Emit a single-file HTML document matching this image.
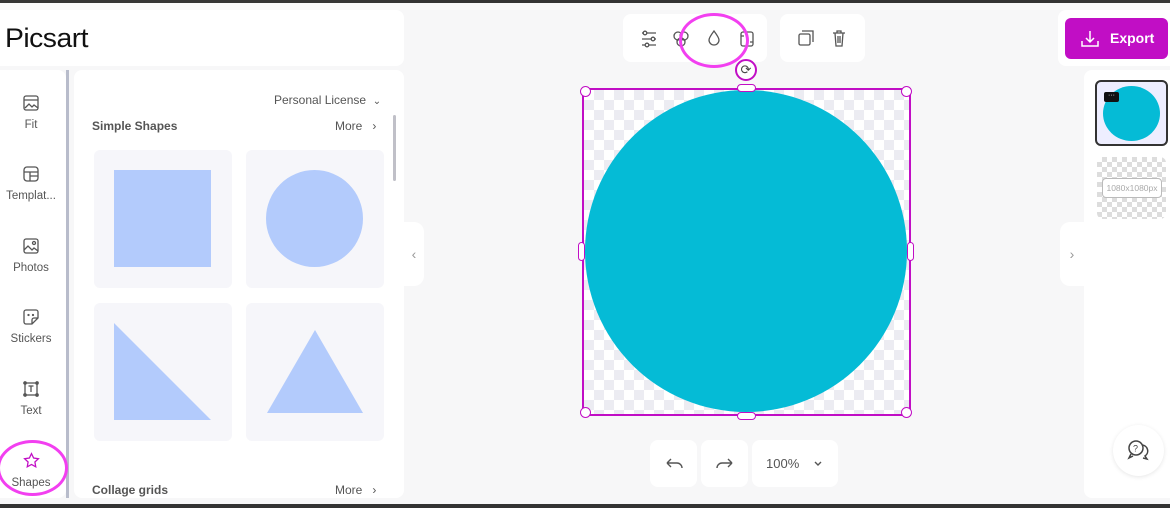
<!DOCTYPE html><html><head><style>
*{margin:0;padding:0;box-sizing:border-box}
body{width:1170px;height:508px;overflow:hidden;background:#f7f7f8;font-family:"Liberation Sans",sans-serif;position:relative;color:#555}
.p{position:absolute;background:#fff;border-radius:8px}
.t{position:absolute;font-size:12px;color:#555}
.nav{position:absolute;left:0;width:62px;text-align:center;font-size:11.5px;color:#555}
.nav svg{display:block;margin:0 auto 8px}
.tile{position:absolute;background:#f6f6fa;border-radius:6px;width:138px;height:138px}
.h{position:absolute;width:11px;height:11px;border:1.5px solid #c10ec5;background:#fff;border-radius:50%}
</style></head><body>
<div style="position:absolute;left:0;top:0;width:1170px;height:3px;background:#333"></div>
<div style="position:absolute;left:0;top:504px;width:1170px;height:4px;background:#333"></div>
<div class="p" style="left:-8px;top:10px;width:412px;height:56px"></div>
<div style="position:absolute;left:5px;top:23px;font-size:27px;color:#111;letter-spacing:-0.5px;transform:scaleX(1.05);transform-origin:left">Picsart</div>
<div class="p" style="left:-8px;top:70px;width:74px;height:428px"></div>
<div style="position:absolute;left:66px;top:70px;width:3px;height:428px;background:#b8bccb"></div>
<div class="p" style="left:74px;top:70px;width:330px;height:428px"></div>
<div style="position:absolute;left:393px;top:115px;width:3px;height:66px;background:#c0c0c8;border-radius:2px"></div>
<div class="nav" style="top:95px"><svg width="16" height="16" viewBox="0 0 16 16" fill="none" stroke="#555" stroke-width="1.3"><rect x="1" y="1" width="14" height="14" rx="2"/><path d="M1 5h14M2 13l4-4 3 3 2-2 4 3"/></svg>Fit</div>
<div class="nav" style="top:166px"><svg width="16" height="16" viewBox="0 0 16 16" fill="none" stroke="#555" stroke-width="1.3"><rect x="1" y="1" width="14" height="14" rx="3"/><path d="M1 6h14M7 6v9M7 10h8"/></svg>Templat...</div>
<div class="nav" style="top:238px"><svg width="16" height="16" viewBox="0 0 16 16" fill="none" stroke="#555" stroke-width="1.3"><rect x="1" y="1" width="14" height="14" rx="2"/><circle cx="11" cy="5" r="1.5"/><path d="M1 12l4-4 4 4 2-2 4 3"/></svg>Photos</div>
<div class="nav" style="top:309px"><svg width="16" height="16" viewBox="0 0 16 16" fill="none" stroke="#555" stroke-width="1.3"><path d="M3 1h10a2 2 0 012 2v6l-6 6H3a2 2 0 01-2-2V3a2 2 0 012-2zM15 9h-4a2 2 0 00-2 2v4"/><circle cx="5.5" cy="6" r=".5"/><circle cx="10" cy="6" r=".5"/></svg>Stickers</div>
<div class="nav" style="top:381px"><svg width="16" height="16" viewBox="0 0 16 16" fill="none" stroke="#555" stroke-width="1.3"><rect x="2" y="2" width="12" height="12"/><path d="M5.5 5h5M8 5v6"/><circle cx="2" cy="2" r="1.2"/><circle cx="14" cy="2" r="1.2"/><circle cx="2" cy="14" r="1.2"/><circle cx="14" cy="14" r="1.2"/></svg>Text</div>
<div class="nav" style="top:452px;color:#555"><svg width="17" height="17" viewBox="0 0 16 16" fill="none" stroke="#c10ec5" stroke-width="1.2"><path d="M8 1.5l2 4.2 4.5.6-3.3 3.1.8 4.5L8 11.7l-4 2.2.8-4.5L1.5 6.3 6 5.7z"/></svg>Shapes</div>
<div style="position:absolute;left:-3px;top:440px;width:71px;height:56px;border:3px solid #f23ff0;border-radius:50%"></div>
<div class="t" style="left:274px;top:93px;font-size:12px">Personal License&nbsp; <span style="font-size:10px">&#8964;</span></div>
<div class="t" style="left:92px;top:119px;font-weight:bold;color:#555">Simple Shapes</div>
<div class="t" style="left:335px;top:119px">More &nbsp;&nbsp;&rsaquo;</div>
<div class="tile" style="left:94px;top:150px"><div style="position:absolute;left:20px;top:20px;width:97px;height:97px;background:#b3cbfc"></div></div>
<div class="tile" style="left:246px;top:150px"><div style="position:absolute;left:20px;top:20px;width:97px;height:97px;background:#b3cbfc;border-radius:50%"></div></div>
<div class="tile" style="left:94px;top:303px"><svg width="138" height="138"><path d="M20 20V117H117z" fill="#b3cbfc"/></svg></div>
<div class="tile" style="left:246px;top:303px"><svg width="138" height="138"><path d="M69 27L117 110H21z" fill="#b3cbfc"/></svg></div>
<div class="t" style="left:92px;top:483px;font-weight:bold">Collage grids</div>
<div class="t" style="left:335px;top:483px">More &nbsp;&nbsp;&rsaquo;</div>
<div style="position:absolute;left:404px;top:222px;width:20px;height:64px;background:#fff;border-radius:0 10px 10px 0;color:#999;font-size:14px;line-height:64px;text-align:center">&lsaquo;</div>
<div style="position:absolute;left:1060px;top:222px;width:24px;height:64px;background:#fff;border-radius:10px 0 0 10px;color:#999;font-size:14px;line-height:64px;text-align:center">&rsaquo;</div>
<div class="p" style="left:623px;top:14px;width:144px;height:48px"></div>
<div class="p" style="left:780px;top:14px;width:85px;height:48px"></div>
<svg style="position:absolute;left:620px;top:14px" width="250" height="48" fill="none" stroke="#555" stroke-width="1.3">
<path d="M22 19h14M22 25h14M22 31h14"/><circle cx="25" cy="19" r="1.8" fill="#fff"/><circle cx="33" cy="25" r="1.8" fill="#fff"/><circle cx="27" cy="31" r="1.8" fill="#fff"/>
<circle cx="58" cy="22" r="4"/><circle cx="64" cy="22" r="4"/><circle cx="61" cy="28" r="4"/>
<path d="M94 17c-3 4-5 7-5 9a5 5 0 0010 0c0-2-2-5-5-9z"/>
<rect x="121" y="18" width="12" height="14" rx="2"/><path d="M121 22h3M130 28h3"/>
<rect x="179" y="20" width="11" height="11" rx="1.5"/><path d="M182 17h11v11"/>
<path d="M213 19h12M217 19v-2h4v2M215 19l1 13h6l1-13M218 22v7M220 22v7"/>
</svg>
<div style="position:absolute;left:679px;top:13px;width:70px;height:55px;border:3px solid #f23ff0;border-radius:50%"></div>
<div style="position:absolute;left:582px;top:88px;width:329px;height:328px;background-color:#fff;background-image:linear-gradient(45deg,#ececf2 25%,transparent 25%,transparent 75%,#ececf2 75%),linear-gradient(45deg,#ececf2 25%,transparent 25%,transparent 75%,#ececf2 75%);background-size:20px 20px;background-position:0 0,10px 10px;border:2px solid #c10ec5"></div>
<div style="position:absolute;left:585px;top:90px;width:322px;height:322px;border-radius:50%;background:#05bbd6"></div>
<div class="h" style="left:580px;top:86px"></div><div class="h" style="left:901px;top:86px"></div>
<div class="h" style="left:580px;top:407px"></div><div class="h" style="left:901px;top:407px"></div>
<div class="h" style="left:737px;top:84px;width:19px;height:8px;border-radius:4px"></div>
<div class="h" style="left:737px;top:412px;width:19px;height:8px;border-radius:4px"></div>
<div class="h" style="left:578px;top:242px;width:7px;height:19px;border-radius:4px"></div>
<div class="h" style="left:907px;top:242px;width:7px;height:19px;border-radius:4px"></div>
<div style="position:absolute;left:735px;top:59px;width:22px;height:22px;border:2px solid #c10ec5;border-radius:50%;background:#fff;font-size:13px;line-height:18px;text-align:center;color:#444">&#10227;</div>
<div class="p" style="left:1058px;top:10px;width:120px;height:56px"></div>
<div style="position:absolute;left:1065px;top:18px;width:103px;height:41px;background:#c10ec5;border-radius:6px;color:#fff;font-size:14px;font-weight:bold;line-height:41px;padding-left:45px">Export</div>
<svg style="position:absolute;left:1080px;top:29px" width="20" height="20" fill="none" stroke="#fff" stroke-width="1.5"><path d="M10 2v11M6 9l4 4 4-4M2 12v5h16v-5"/></svg>
<div class="p" style="left:1084px;top:70px;width:94px;height:428px"></div>
<div style="position:absolute;left:1095px;top:80px;width:73px;height:66px;border:2px solid #333;border-radius:6px;background:#eef"></div>
<div style="position:absolute;left:1103px;top:86px;width:57px;height:55px;border-radius:50%;background:#05bbd6"></div>
<div style="position:absolute;left:1104px;top:92px;width:15px;height:10px;background:#111;border-radius:2px;color:#fff;font-size:7px;line-height:7px;text-align:center">&middot;&middot;&middot;</div>
<div style="position:absolute;left:1097px;top:157px;width:69px;height:62px;border-radius:6px;background-color:#fff;background-image:linear-gradient(45deg,#ddd 25%,transparent 25%,transparent 75%,#ddd 75%),linear-gradient(45deg,#ddd 25%,transparent 25%,transparent 75%,#ddd 75%);background-size:10px 10px;background-position:0 0,5px 5px"></div>
<div style="position:absolute;left:1102px;top:178px;width:60px;height:20px;background:#fff;border:1px solid #bbb;border-radius:4px;font-size:8.5px;color:#aaa;line-height:18px;text-align:center">1080x1080px</div>
<div style="position:absolute;left:1113px;top:425px;width:51px;height:51px;border-radius:50%;background:#fff;box-shadow:0 1px 4px rgba(0,0,0,.1)"></div>
<svg style="position:absolute;left:1127px;top:439px" width="24" height="22" fill="none" stroke="#444" stroke-width="1.5"><circle cx="9" cy="9" r="7"/><path d="M4 15l-2 4 4-2M15 6a6 6 0 013 11l2 3-4-1"/><text x="6" y="12.5" font-size="9" fill="#444" stroke="none" font-family="Liberation Sans">?</text></svg>
<div class="p" style="left:650px;top:440px;width:47px;height:47px"></div>
<div class="p" style="left:701px;top:440px;width:47px;height:47px"></div>
<div class="p" style="left:752px;top:440px;width:86px;height:47px"></div>
<svg style="position:absolute;left:650px;top:440px" width="190" height="47" fill="none" stroke="#555" stroke-width="1.4"><path d="M17 23h10a5 5 0 015 5M17 23l4-4M17 23l4 4"/><path d="M82 23H72a5 5 0 00-5 5M82 23l-4-4M82 23l-4 4"/><path d="M165 22l3 3 3-3"/></svg>
<div class="t" style="left:766px;top:456px;font-size:13px;color:#555">100%</div>
</body></html>
